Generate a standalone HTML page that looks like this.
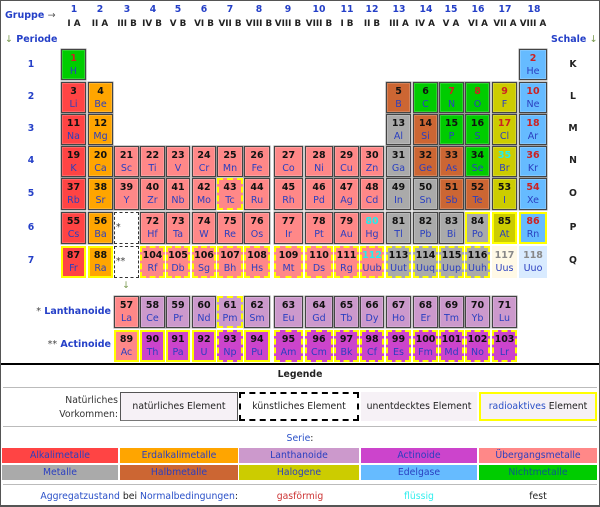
<!DOCTYPE html>
<html lang="de"><head><meta charset="utf-8"><title>Periodensystem</title>
<style>
html,body{margin:0;padding:0;background:#fff}
#p{position:relative;width:600px;height:507px;overflow:hidden;font-family:"DejaVu Sans",sans-serif;font-size:9.3px;color:#222;background:#fff;filter:blur(.3px)}
#p div{position:absolute;box-sizing:border-box}
.frame{left:0;top:0;width:600px;height:507px;border:1px solid #555;border-bottom-width:2px}
.e{text-align:center;line-height:13.5px;padding-top:1.5px;color:#2a3fc0;font-size:9.5px;border:1px solid #444;box-shadow:inset 0 0 0 1px rgba(255,255,255,.18),0 0 0 .5px #999}
.e b{color:#111;font-size:9.5px;display:block}
.d{border:2px dashed #ff0;padding-top:.5px;box-shadow:none}
.r{border:2px solid #ff0;padding-top:.5px;box-shadow:none}
.u{border:0;padding-top:2.5px;box-shadow:none}
.u b{color:#888}
.g b{color:#c22}
.l b{color:#2ee}
.alk{background:#f44}.ea{background:#ffa500}.la{background:#c9c}.ac{background:#c4c}.tr{background:#f88}.me{background:#aaa}.hm{background:#c63}.ha{background:#cc0}.ed{background:#6bf}.nm{background:#0c0}
.c1{left:61px;width:25px}.c2{left:88px;width:25px}.c3{left:114px;width:25px}.c4{left:140px;width:25px}.c5{left:166px;width:24px}.c6{left:192px;width:24px}.c7{left:217px;width:26px}.c8{left:244px;width:26px}.c9{left:274px;width:29px}.c10{left:305px;width:28px}.c11{left:334px;width:25px}.c12{left:360px;width:24px}.c13{left:386px;width:25px}.c14{left:413px;width:25px}.c15{left:439px;width:25px}.c16{left:465px;width:25px}.c17{left:492px;width:25px}.c18{left:519px;width:28px}
.r1{top:49px;height:31px}.r2{top:82px;height:31px}.r3{top:114px;height:31px}.r4{top:146px;height:31px}.r5{top:178px;height:32px}.r6{top:212px;height:32px}.r7{top:246px;height:32px}.r8{top:296px;height:32px}.r9{top:330px;height:32px}
.gn{top:4px;width:30px;text-align:center;color:#2540c8;font-weight:bold;font-size:9.3px;line-height:12px}
.gr{top:18px;width:36px;text-align:center;color:#222;font-weight:bold;font-size:8.8px;line-height:12px;white-space:nowrap}
.lb{color:#2540c8;font-weight:bold;font-size:9.5px;line-height:12px;white-space:nowrap}
.pn{left:21px;width:20px;text-align:center;color:#2540c8;font-weight:bold;line-height:12px}
.sn{left:563px;width:20px;text-align:center;color:#222;font-weight:bold;line-height:12px}
.ph{border:1px dashed #333;background:#fff;text-align:left;padding-left:1px;color:#333;line-height:30px;left:114px;width:25px;font-size:9.3px}
.hr{left:3px;width:594px;height:1px;background:#bbb}
.lg{text-align:center;line-height:27px;color:#222;font-size:9.3px;white-space:nowrap;top:392px;height:29px;background:#f6f1f6}
.s{text-align:center;line-height:15px;color:#2a3fc0;font-size:9.3px;height:15px}
.a{color:#2a50c8}
.t{top:491px;line-height:12px;text-align:center;white-space:nowrap;font-size:9.3px}
.g1{color:#7a9a50}
</style></head><body>
<div id="p">
<div class="lb" style="left:5px;top:10px">Gruppe <span style="color:#555;font-weight:normal">→</span></div>
<div class="lb" style="left:5px;top:34px"><span class="g1" style="font-weight:normal">↓</span> Periode</div>
<div class="lb" style="left:551px;top:34px">Schale <span class="g1" style="font-weight:normal">↓</span></div>

<div class="gn" style="left:59px">1</div><div class="gn" style="left:85px">2</div><div class="gn" style="left:112px">3</div><div class="gn" style="left:138px">4</div><div class="gn" style="left:163px">5</div><div class="gn" style="left:189px">6</div><div class="gn" style="left:215px">7</div><div class="gn" style="left:244px">8</div><div class="gn" style="left:273px">9</div><div class="gn" style="left:304px">10</div><div class="gn" style="left:332px">11</div><div class="gn" style="left:357px">12</div><div class="gn" style="left:384px">13</div><div class="gn" style="left:411px">14</div><div class="gn" style="left:436px">15</div><div class="gn" style="left:463px">16</div><div class="gn" style="left:490px">17</div><div class="gn" style="left:519px">18</div>
<div class="gr" style="left:56px">I A</div><div class="gr" style="left:82px">II A</div><div class="gr" style="left:109px">III B</div><div class="gr" style="left:134px">IV B</div><div class="gr" style="left:160px">V B</div><div class="gr" style="left:186px">VI B</div><div class="gr" style="left:212px">VII B</div><div class="gr" style="left:241px">VIII B</div><div class="gr" style="left:270px">VIII B</div><div class="gr" style="left:301px">VIII B</div><div class="gr" style="left:329px">I B</div><div class="gr" style="left:354px">II B</div><div class="gr" style="left:381px">III A</div><div class="gr" style="left:407px">IV A</div><div class="gr" style="left:433px">V A</div><div class="gr" style="left:460px">VI A</div><div class="gr" style="left:487px">VII A</div><div class="gr" style="left:515px">VIII A</div>

<div class="pn" style="top:59px">1</div><div class="pn" style="top:91px">2</div><div class="pn" style="top:123px">3</div><div class="pn" style="top:155px">4</div><div class="pn" style="top:188px">5</div><div class="pn" style="top:222px">6</div><div class="pn" style="top:255px">7</div>
<div class="sn" style="top:59px">K</div><div class="sn" style="top:91px">L</div><div class="sn" style="top:123px">M</div><div class="sn" style="top:155px">N</div><div class="sn" style="top:188px">O</div><div class="sn" style="top:222px">P</div><div class="sn" style="top:255px">Q</div>

<div class="e c1 r1 nm g"><b>1</b>H</div>
<div class="e c18 r1 ed g"><b>2</b>He</div>

<div class="e c1 r2 alk"><b>3</b>Li</div><div class="e c2 r2 ea"><b>4</b>Be</div>
<div class="e c13 r2 hm"><b>5</b>B</div><div class="e c14 r2 nm"><b>6</b>C</div><div class="e c15 r2 nm g"><b>7</b>N</div><div class="e c16 r2 nm g"><b>8</b>O</div><div class="e c17 r2 ha g"><b>9</b>F</div><div class="e c18 r2 ed g"><b>10</b>Ne</div>

<div class="e c1 r3 alk"><b>11</b>Na</div><div class="e c2 r3 ea"><b>12</b>Mg</div>
<div class="e c13 r3 me"><b>13</b>Al</div><div class="e c14 r3 hm"><b>14</b>Si</div><div class="e c15 r3 nm"><b>15</b>P</div><div class="e c16 r3 nm"><b>16</b>S</div><div class="e c17 r3 ha g"><b>17</b>Cl</div><div class="e c18 r3 ed g"><b>18</b>Ar</div>

<div class="e c1 r4 alk"><b>19</b>K</div><div class="e c2 r4 ea"><b>20</b>Ca</div><div class="e c3 r4 tr"><b>21</b>Sc</div><div class="e c4 r4 tr"><b>22</b>Ti</div><div class="e c5 r4 tr"><b>23</b>V</div><div class="e c6 r4 tr"><b>24</b>Cr</div><div class="e c7 r4 tr"><b>25</b>Mn</div><div class="e c8 r4 tr"><b>26</b>Fe</div><div class="e c9 r4 tr"><b>27</b>Co</div><div class="e c10 r4 tr"><b>28</b>Ni</div><div class="e c11 r4 tr"><b>29</b>Cu</div><div class="e c12 r4 tr"><b>30</b>Zn</div><div class="e c13 r4 me"><b>31</b>Ga</div><div class="e c14 r4 hm"><b>32</b>Ge</div><div class="e c15 r4 hm"><b>33</b>As</div><div class="e c16 r4 nm"><b>34</b>Se</div><div class="e c17 r4 ha l"><b>35</b>Br</div><div class="e c18 r4 ed g"><b>36</b>Kr</div>

<div class="e c1 r5 alk"><b>37</b>Rb</div><div class="e c2 r5 ea"><b>38</b>Sr</div><div class="e c3 r5 tr"><b>39</b>Y</div><div class="e c4 r5 tr"><b>40</b>Zr</div><div class="e c5 r5 tr"><b>41</b>Nb</div><div class="e c6 r5 tr"><b>42</b>Mo</div><div class="e c7 r5 tr d"><b>43</b>Tc</div><div class="e c8 r5 tr"><b>44</b>Ru</div><div class="e c9 r5 tr"><b>45</b>Rh</div><div class="e c10 r5 tr"><b>46</b>Pd</div><div class="e c11 r5 tr"><b>47</b>Ag</div><div class="e c12 r5 tr"><b>48</b>Cd</div><div class="e c13 r5 me"><b>49</b>In</div><div class="e c14 r5 me"><b>50</b>Sn</div><div class="e c15 r5 hm"><b>51</b>Sb</div><div class="e c16 r5 hm"><b>52</b>Te</div><div class="e c17 r5 ha"><b>53</b>I</div><div class="e c18 r5 ed g"><b>54</b>Xe</div>

<div class="e c1 r6 alk"><b>55</b>Cs</div><div class="e c2 r6 ea"><b>56</b>Ba</div><div class="ph r6">*</div><div class="e c4 r6 tr"><b>72</b>Hf</div><div class="e c5 r6 tr"><b>73</b>Ta</div><div class="e c6 r6 tr"><b>74</b>W</div><div class="e c7 r6 tr"><b>75</b>Re</div><div class="e c8 r6 tr"><b>76</b>Os</div><div class="e c9 r6 tr"><b>77</b>Ir</div><div class="e c10 r6 tr"><b>78</b>Pt</div><div class="e c11 r6 tr"><b>79</b>Au</div><div class="e c12 r6 tr l"><b>80</b>Hg</div><div class="e c13 r6 me"><b>81</b>Tl</div><div class="e c14 r6 me"><b>82</b>Pb</div><div class="e c15 r6 me"><b>83</b>Bi</div><div class="e c16 r6 me r"><b>84</b>Po</div><div class="e c17 r6 ha r"><b>85</b>At</div><div class="e c18 r6 ed r g"><b>86</b>Rn</div>

<div class="e c1 r7 alk r"><b>87</b>Fr</div><div class="e c2 r7 ea r"><b>88</b>Ra</div><div class="ph r7">**</div><div class="e c4 r7 tr d"><b>104</b>Rf</div><div class="e c5 r7 tr d"><b>105</b>Db</div><div class="e c6 r7 tr d"><b>106</b>Sg</div><div class="e c7 r7 tr d"><b>107</b>Bh</div><div class="e c8 r7 tr d"><b>108</b>Hs</div><div class="e c9 r7 tr d"><b>109</b>Mt</div><div class="e c10 r7 tr d"><b>110</b>Ds</div><div class="e c11 r7 tr d"><b>111</b>Rg</div><div class="e c12 r7 tr d l"><b>112</b>Uub</div><div class="e c13 r7 me d"><b>113</b>Uut</div><div class="e c14 r7 me d"><b>114</b>Uuq</div><div class="e c15 r7 me d"><b>115</b>Uup</div><div class="e c16 r7 me d"><b>116</b>Uuh</div><div class="e c17 r7 u" style="background:#fff9e6"><b>117</b>Uus</div><div class="e c18 r7 u" style="background:#d9ebff"><b>118</b>Uuo</div>

<div class="g1" style="left:121px;top:280px;width:10px;text-align:center;line-height:12px">↓</div>
<div class="lb" style="left:10px;width:101px;text-align:right;top:306px"><span style="color:#444;font-weight:normal">*</span> Lanthanoide</div>
<div class="lb" style="left:10px;width:101px;text-align:right;top:339px"><span style="color:#444;font-weight:normal">**</span> Actinoide</div>

<div class="e c3 r8 tr"><b>57</b>La</div><div class="e c4 r8 la"><b>58</b>Ce</div><div class="e c5 r8 la"><b>59</b>Pr</div><div class="e c6 r8 la"><b>60</b>Nd</div><div class="e c7 r8 la d"><b>61</b>Pm</div><div class="e c8 r8 la"><b>62</b>Sm</div><div class="e c9 r8 la"><b>63</b>Eu</div><div class="e c10 r8 la"><b>64</b>Gd</div><div class="e c11 r8 la"><b>65</b>Tb</div><div class="e c12 r8 la"><b>66</b>Dy</div><div class="e c13 r8 la"><b>67</b>Ho</div><div class="e c14 r8 la"><b>68</b>Er</div><div class="e c15 r8 la"><b>69</b>Tm</div><div class="e c16 r8 la"><b>70</b>Yb</div><div class="e c17 r8 la"><b>71</b>Lu</div>

<div class="e c3 r9 tr r"><b>89</b>Ac</div><div class="e c4 r9 ac r"><b>90</b>Th</div><div class="e c5 r9 ac r"><b>91</b>Pa</div><div class="e c6 r9 ac r"><b>92</b>U</div><div class="e c7 r9 ac d"><b>93</b>Np</div><div class="e c8 r9 ac r"><b>94</b>Pu</div><div class="e c9 r9 ac d"><b>95</b>Am</div><div class="e c10 r9 ac d"><b>96</b>Cm</div><div class="e c11 r9 ac d"><b>97</b>Bk</div><div class="e c12 r9 ac d"><b>98</b>Cf</div><div class="e c13 r9 ac d"><b>99</b>Es</div><div class="e c14 r9 ac d"><b>100</b>Fm</div><div class="e c15 r9 ac d"><b>101</b>Md</div><div class="e c16 r9 ac d"><b>102</b>No</div><div class="e c17 r9 ac d"><b>103</b>Lr</div>

<div style="left:0;top:363px;width:600px;height:2px;background:#000"></div>
<div style="left:0;width:600px;top:369px;text-align:center;font-weight:bold;color:#222;line-height:12px">Legende</div>
<div class="hr" style="top:387px"></div>
<div style="left:30px;width:88px;top:394px;text-align:right;line-height:14px;color:#333">Natürliches<br>Vorkommen:</div>
<div class="lg" style="left:120px;width:118px;border:1px solid #555;border-bottom-color:#777">natürliches Element</div>
<div class="lg" style="left:239px;width:120px;border:2px dashed #000;background:#fff;line-height:25px">künstliches Element</div>
<div class="lg" style="left:361px;width:116px;line-height:29px">unentdecktes Element</div>
<div class="lg" style="left:479px;width:118px;border:2px solid #ff0;background:#f6f1f6;line-height:25px"><span class="a">radioaktives</span> Element</div>
<div class="hr" style="top:426px"></div>
<div style="left:0;width:600px;top:433px;text-align:center;line-height:12px"><span class="a">Serie</span>:</div>

<div class="s alk" style="left:2px;width:116px;top:448px">Alkalimetalle</div><div class="s ea" style="left:120px;width:118px;top:448px">Erdalkalimetalle</div><div class="s la" style="left:239px;width:120px;top:448px">Lanthanoide</div><div class="s ac" style="left:361px;width:116px;top:448px">Actinoide</div><div class="s tr" style="left:479px;width:118px;top:448px">Übergangsmetalle</div>
<div class="s me" style="left:2px;width:116px;top:465px">Metalle</div><div class="s hm" style="left:120px;width:118px;top:465px">Halbmetalle</div><div class="s ha" style="left:239px;width:120px;top:465px">Halogene</div><div class="s ed" style="left:361px;width:116px;top:465px">Edelgase</div><div class="s nm" style="left:479px;width:118px;top:465px;color:#0a5a8a">Nichtmetalle</div>
<div class="hr" style="top:484px"></div>
<div class="t" style="left:20px;width:218px;text-align:right"><span class="a">Aggregatzustand</span> bei <span class="a">Normalbedingungen</span>:</div>
<div class="t" style="left:240px;width:120px;color:#c33">gasförmig</div>
<div class="t" style="left:361px;width:116px;color:#3ee">flüssig</div>
<div class="t" style="left:479px;width:118px;color:#222">fest</div>
<div class="frame"></div>
</div>
</body></html>
